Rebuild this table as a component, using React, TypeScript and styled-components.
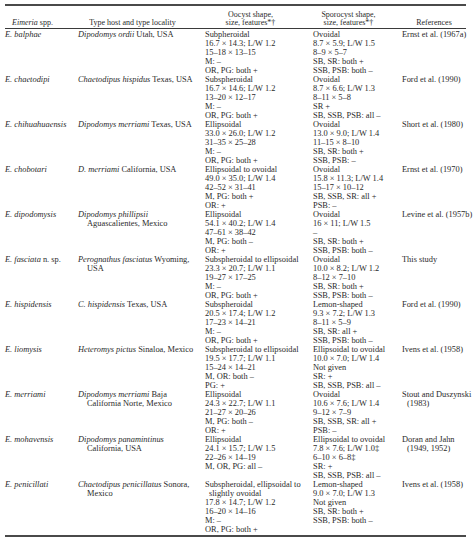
import React from 'react'
import styled, { createGlobalStyle } from 'styled-components'

type Cell = React.ReactNode[]

interface Row {
  name: React.ReactNode
  host: Cell
  oocyst: Cell
  sporocyst: Cell
  refs: Cell
}

const GlobalStyle = createGlobalStyle`
  body {
    margin: 0;
    background: #ffffff;
    font-family: "Liberation Serif", "Times New Roman", serif;
    color: #2a2a2a;
  }
`

const I = styled.em`
  font-style: italic;
`

const Indent = styled.span<{ $size?: number }>`
  display: inline-block;
  padding-left: ${(p) => p.$size ?? 9}px;
`

const rows: Row[] = [
  {
    name: <I>E. balphae</I>,
    host: [<><I>Dipodomys ordii</I> Utah, USA</>],
    oocyst: ['Subpheroidal', '16.7 × 14.3; L/W 1.2', '15–18 × 13–15', 'M: –', 'OR, PG: both +'],
    sporocyst: ['Ovoidal', '8.7 × 5.9; L/W 1.5', '8–9 × 5–7', 'SB, SR: both +', 'SSB, PSB: both –'],
    refs: ['Ernst et al. (1967a)'],
  },
  {
    name: <I>E. chaetodipi</I>,
    host: [<><I>Chaetodipus hispidus</I> Texas, USA</>],
    oocyst: ['Subspheroidal', '16.7 × 14.6; L/W 1.2', '13–20 × 12–17', 'M: –', 'OR, PG: both +'],
    sporocyst: ['Ovoidal', '8.7 × 6.6; L/W 1.3', '8–11 × 5–8', 'SR +', 'SB, SSB, PSB: all –'],
    refs: ['Ford et al. (1990)'],
  },
  {
    name: <I>E. chihuahuaensis</I>,
    host: [<><I>Dipodomys merriami</I> Texas, USA</>],
    oocyst: ['Ellipsoidal', '33.0 × 26.0; L/W 1.2', '31–35 × 25–28', 'M: –', 'OR, PG: both +'],
    sporocyst: ['Ovoidal', '13.0 × 9.0; L/W 1.4', '11–15 × 8–10', 'SB, SR: both +', 'SSB, PSB: –'],
    refs: ['Short et al. (1980)'],
  },
  {
    name: <I>E. chobotari</I>,
    host: [<><I>D. merriami</I> California, USA</>],
    oocyst: ['Ellipsoidal to ovoidal', '49.0 × 35.0; L/W 1.4', '42–52 × 31–41', 'M, PG: both +', 'OR: +'],
    sporocyst: ['Ovoidal', '15.8 × 11.3; L/W 1.4', '15–17 × 10–12', 'SB, SSB, SR: all +', 'PSB: –'],
    refs: ['Ernst et al. (1970)'],
  },
  {
    name: <I>E. dipodomysis</I>,
    host: [<I>Dipodomys phillipsii</I>, <Indent>Aguascalientes, Mexico</Indent>],
    oocyst: ['Ellipsoidal', '54.1 × 40.2; L/W 1.4', '47–61 × 38–42', 'M, PG: both –', 'OR: +'],
    sporocyst: ['Ovoidal', '16 × 11; L/W 1.5', '–', 'SB, SR: both +', 'SSB, PSB: both –'],
    refs: ['Levine et al. (1957b)'],
  },
  {
    name: <><I>E. fasciata</I> n. sp.</>,
    host: [<><I>Perognathus fasciatus</I> Wyoming,</>, <Indent>USA</Indent>],
    oocyst: ['Subspheroidal to ellipsoidal', '23.3 × 20.7; L/W 1.1', '19–27 × 17–25', 'M: –', 'OR, PG: both +'],
    sporocyst: ['Ovoidal', '10.0 × 8.2; L/W 1.2', '8–12 × 7–10', 'SB, SR: both +', 'SSB, PSB: both –'],
    refs: ['This study'],
  },
  {
    name: <I>E. hispidensis</I>,
    host: [<><I>C. hispidensis</I> Texas, USA</>],
    oocyst: ['Subspheroidal', '20.5 × 17.4; L/W 1.2', '17–23 × 14–21', 'M: –', 'OR, PG: both +'],
    sporocyst: ['Lemon-shaped', '9.3 × 7.2; L/W 1.3', '8–11 × 5–9', 'SB, SR: all +', 'SSB, PSB: both –'],
    refs: ['Ford et al. (1990)'],
  },
  {
    name: <I>E. liomysis</I>,
    host: [<><I>Heteromys pictus</I> Sinaloa, Mexico</>],
    oocyst: ['Subspheroidal to ellipsoidal', '19.5 × 17.7; L/W 1.1', '15–24 × 14–21', 'M, OR: both –', 'PG: +'],
    sporocyst: ['Ellipsoidal to ovoidal', '10.0 × 7.0; L/W 1.4', 'Not given', 'SR: +', 'SB, SSB, PSB: all –'],
    refs: ['Ivens et al. (1958)'],
  },
  {
    name: <I>E. merriami</I>,
    host: [<><I>Dipodomys merriami</I> Baja</>, <Indent>California Norte, Mexico</Indent>],
    oocyst: ['Ellipsoidal', '24.3 × 22.7; L/W 1.1', '21–27 × 20–26', 'M, PG: both –', 'OR: +'],
    sporocyst: ['Ovoidal', '10.6 × 7.6; L/W 1.4', '9–12 × 7–9', 'SB, SSB, SR: all +', 'PSB: –'],
    refs: ['Stout and Duszynski', <Indent $size={5}>(1983)</Indent>],
  },
  {
    name: <I>E. mohavensis</I>,
    host: [<I>Dipodomys panamintinus</I>, <Indent>California, USA</Indent>],
    oocyst: ['Ellipsoidal', '24.1 × 15.7; L/W 1.5', '22–26 × 14–19', 'M, OR, PG: all –'],
    sporocyst: ['Ellipsoidal to ovoidal', '7.8 × 7.6; L/W 1.0‡', '6–10 × 6–8‡', 'SR: +', 'SB, SSB, PSB: all –'],
    refs: ['Doran and Jahn', <Indent $size={5}>(1949, 1952)</Indent>],
  },
  {
    name: <I>E. penicillati</I>,
    host: [<><I>Chaetodipus penicillatus</I> Sonora,</>, <Indent>Mexico</Indent>],
    oocyst: [
      'Subspheroidal, ellipsoidal to',
      <Indent $size={4}>slightly ovoidal</Indent>,
      '17.8 × 14.7; L/W 1.2',
      '16–20 × 14–16',
      'M: –',
      'OR, PG: both +',
    ],
    sporocyst: ['Lemon-shaped', '9.0 × 7.0; L/W 1.3', 'Not given', 'SB, SR: both +', 'SSB, PSB: both –'],
    refs: ['Ivens et al. (1958)'],
  },
]

const columns = '73px 127px 108px 89px 64px'

const Page = styled.div`
  width: 474px;
  height: 538px;
  overflow: hidden;
  padding-top: 4px;
  box-sizing: border-box;
`

const Table = styled.div`
  margin-left: 5px;
  width: 461px;
  border-top: 2px solid #4a4a4a;
  border-bottom: 2px solid #4a4a4a;
`

const HeadRow = styled.div`
  display: grid;
  grid-template-columns: ${columns};
  align-items: end;
  padding: 5px 0 1.5px;
  border-bottom: 1px solid #3a3a3a;
  font-size: 8px;
  line-height: 7.5px;
`

const HeadCell = styled.div<{ $pr?: number }>`
  text-align: center;
  padding-right: ${(p) => p.$pr ?? 0}px;
  white-space: nowrap;
`

const Body = styled.div`
  padding: 1px 0 1px;
`

const BodyRow = styled.div`
  display: grid;
  grid-template-columns: ${columns};
  align-items: start;
  font-size: 8.4px;
  line-height: 9px;
`

const BodyCell = styled.div`
  white-space: nowrap;
`

const Line = styled.div`
  height: 9px;
`

const Lines = ({ items }: { items: Cell }) => (
  <BodyCell>
    {items.map((item, i) => (
      <Line key={i}>{item}</Line>
    ))}
  </BodyCell>
)

export default function App() {
  return (
    <Page>
      <GlobalStyle />
      <Table>
        <HeadRow>
          <HeadCell $pr={18}>
            <I>Eimeria</I> spp.
          </HeadCell>
          <HeadCell $pr={18}>Type host and type locality</HeadCell>
          <HeadCell $pr={17}>
            Oocyst shape,
            <br />
            size, features*†
          </HeadCell>
          <HeadCell $pr={18}>
            Sporocyst shape,
            <br />
            size, features*†
          </HeadCell>
          <HeadCell>References</HeadCell>
        </HeadRow>
        <Body>
          {rows.map((row, i) => (
            <BodyRow key={i}>
              <Lines items={[row.name]} />
              <Lines items={row.host} />
              <Lines items={row.oocyst} />
              <Lines items={row.sporocyst} />
              <Lines items={row.refs} />
            </BodyRow>
          ))}
        </Body>
      </Table>
    </Page>
  )
}
